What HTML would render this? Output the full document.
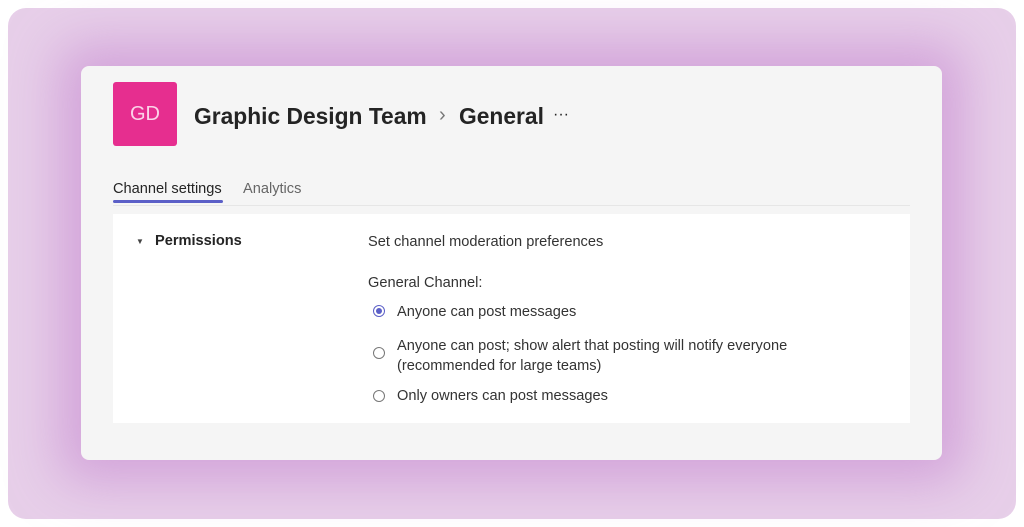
<!DOCTYPE html>
<html><head><style>
body{margin:0;width:1024px;height:527px;background:#fff;font-family:"Liberation Sans",sans-serif;position:relative;overflow:hidden}
.bg{position:absolute;left:8px;top:8px;width:1008px;height:511px;border-radius:18px;background:#e7cfe9;overflow:hidden}
.card{position:absolute;left:81px;top:66px;width:861px;height:394px;background:#f5f5f5;border-radius:8px;box-shadow:0 0 50px 22px rgba(195,130,205,.55)}
.av{position:absolute;left:113px;top:82px;width:64px;height:64px;background:#e62e8f;border-radius:3px;color:#fbd3e8;font-size:20px;text-align:center;line-height:64px}
.t{position:absolute;top:103px;font-size:22.8px;font-weight:bold;color:#242424}
.tab{position:absolute;top:181px;font-size:14.6px}
.panel{position:absolute;left:113px;top:214px;width:797px;height:209px;background:#fff}
.tx{position:absolute;font-size:14.6px;color:#333}
.r{position:absolute;left:373px;width:10px;height:10px;border:1px solid #777;border-radius:50%}
</style></head><body>
<div class="bg"></div>
<div class="card"></div>
<div class="av">GD</div>
<div class="t" style="left:194px">Graphic Design Team</div>
<div class="t" style="left:439px;font-weight:normal;color:#777;font-size:20px;top:104px">›</div>
<div class="t" style="left:459px">General</div>
<div class="t" style="left:553px;font-size:16px;top:106px;font-weight:normal">···</div>
<div class="tab" style="left:113px;color:#242424">Channel settings</div>
<div style="position:absolute;left:113px;top:200px;width:110px;height:3px;background:#5b5fc7;border-radius:2px"></div>
<div class="tab" style="left:243px;color:#666">Analytics</div>
<div style="position:absolute;left:113px;top:205px;width:797px;height:1px;background:#e6e6e6"></div>
<div class="panel"></div>
<div class="tx" style="left:136px;top:237px;font-size:8px;color:#444">▼</div>
<div class="tx" style="left:155px;top:233px;font-weight:bold;color:#242424">Permissions</div>
<div class="tx" style="left:368px;top:234px">Set channel moderation preferences</div>
<div class="tx" style="left:368px;top:275px">General Channel:</div>
<div class="r" style="top:305px;border-color:#5b5fc7"><div style="position:absolute;left:2px;top:2px;width:6px;height:6px;border-radius:50%;background:#5b5fc7"></div></div>
<div class="tx" style="left:397px;top:304px">Anyone can post messages</div>
<div class="r" style="top:347px"></div>
<div class="tx" style="left:397px;top:336px;line-height:20px">Anyone can post; show alert that posting will notify everyone<br>(recommended for large teams)</div>
<div class="r" style="top:390px"></div>
<div class="tx" style="left:397px;top:388px">Only owners can post messages</div>
</body></html>
